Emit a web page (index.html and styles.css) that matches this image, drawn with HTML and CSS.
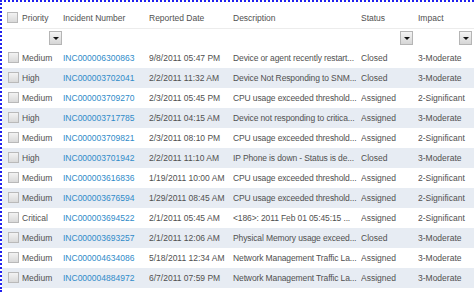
FILE: index.html
```html
<!DOCTYPE html>
<html>
<head>
<meta charset="utf-8">
<link rel="stylesheet" href="styles.css">
</head>
<body>
<div class="frame">
<table class="grid">
<colgroup>
<col class="c-chk"><col class="c-pri"><col class="c-inc"><col class="c-date"><col class="c-desc"><col class="c-status"><col class="c-imp">
</colgroup>
<thead>
<tr class="head">
<th><span class="cb"></span></th><th>Priority</th><th>Incident Number</th><th>Reported Date</th><th>Description</th><th>Status</th><th>Impact</th>
</tr>
<tr class="filter">
<td></td><td><span class="dd"></span></td><td></td><td></td><td></td><td><span class="dd"></span></td><td><span class="dd"></span></td>
</tr>
</thead>
<tbody>
<tr><td><span class="cb"></span></td><td>Medium</td><td class="link">INC000006300863</td><td>9/8/2011 05:47 PM</td><td class="desc">Device or agent recently restart...</td><td>Closed</td><td>3-Moderate</td></tr>
<tr><td><span class="cb"></span></td><td>High</td><td class="link">INC000003702041</td><td>2/2/2011 11:32 AM</td><td class="desc">Device Not Responding to SNM...</td><td>Closed</td><td>3-Moderate</td></tr>
<tr><td><span class="cb"></span></td><td>Medium</td><td class="link">INC000003709270</td><td>2/3/2011 05:45 PM</td><td class="desc">CPU usage exceeded threshold...</td><td>Assigned</td><td>2-Significant</td></tr>
<tr><td><span class="cb"></span></td><td>High</td><td class="link">INC000003717785</td><td>2/5/2011 04:15 AM</td><td class="desc">Device not responding to critica...</td><td>Assigned</td><td>3-Moderate</td></tr>
<tr><td><span class="cb"></span></td><td>Medium</td><td class="link">INC000003709821</td><td>2/3/2011 08:10 PM</td><td class="desc">CPU usage exceeded threshold...</td><td>Assigned</td><td>2-Significant</td></tr>
<tr><td><span class="cb"></span></td><td>High</td><td class="link">INC000003701942</td><td>2/2/2011 11:10 AM</td><td class="desc">IP Phone is down - Status is de...</td><td>Closed</td><td>3-Moderate</td></tr>
<tr><td><span class="cb"></span></td><td>Medium</td><td class="link">INC000003616836</td><td>1/19/2011 10:00 AM</td><td class="desc">CPU usage exceeded threshold...</td><td>Assigned</td><td>2-Significant</td></tr>
<tr><td><span class="cb"></span></td><td>Medium</td><td class="link">INC000003676594</td><td>1/29/2011 08:45 AM</td><td class="desc">CPU usage exceeded threshold...</td><td>Assigned</td><td>2-Significant</td></tr>
<tr><td><span class="cb"></span></td><td>Critical</td><td class="link">INC000003694522</td><td>2/1/2011 05:45 AM</td><td class="desc">&lt;186&gt;: 2011 Feb 01 05:45:15 ...</td><td>Assigned</td><td>2-Significant</td></tr>
<tr><td><span class="cb"></span></td><td>Medium</td><td class="link">INC000003693257</td><td>2/1/2011 12:06 AM</td><td class="desc">Physical Memory usage exceed...</td><td>Closed</td><td>3-Moderate</td></tr>
<tr><td><span class="cb"></span></td><td>Medium</td><td class="link">INC000004634086</td><td>5/18/2011 12:34 AM</td><td class="desc">Network Management Traffic La...</td><td>Assigned</td><td>3-Moderate</td></tr>
<tr><td><span class="cb"></span></td><td>Medium</td><td class="link">INC000004884972</td><td>6/7/2011 07:59 PM</td><td class="desc">Network Management Traffic La...</td><td>Assigned</td><td>3-Moderate</td></tr>
</tbody>
</table>
</div>
</body>
</html>
```
FILE: styles.css
```css
html, body {
  margin: 0;
  padding: 0;
  background: #ffffff;
}
.frame {
  width: 472px;
  height: 290px;
  border-top: 2px dotted #2020ee;
  border-left: 2px dotted #2020ee;
  overflow: hidden;
}
.grid {
  border-collapse: collapse;
  table-layout: fixed;
  width: 472px;
  font-family: "Liberation Sans", Arial, sans-serif;
  font-size: 8.5px;
  color: #505050;
}
.c-chk { width: 20px; }
.c-pri { width: 41px; }
.c-inc { width: 86px; }
.c-date { width: 84px; }
.c-desc { width: 128px; }
.c-status { width: 57px; }
.c-imp { width: 56px; }
.grid th, .grid td {
  padding: 0;
  white-space: nowrap;
  overflow: hidden;
  text-align: left;
  font-weight: normal;
}
.head th {
  height: 26px;
  border-bottom: 1px solid #ececec;
  vertical-align: middle;
  padding-top: 6px;
  box-sizing: border-box;
}
.head th:first-child {
  padding-left: 5px;
}
.filter td {
  height: 19px;
  vertical-align: middle;
  text-align: right;
}
.filter td:nth-child(2) { padding-right: 1px; }
.filter td:nth-child(6) { padding-right: 5px; }
.filter td:nth-child(7) { padding-right: 2px; }
tbody tr td {
  height: 20px;
  vertical-align: middle;
}
tbody tr:nth-child(even) td {
  background: #e7ecf3;
}
tbody td:first-child {
  padding-left: 6px;
}
.grid .desc {
  letter-spacing: -0.12px;
}
.link {
  color: #2f8bc9;
}
.cb {
  display: inline-block;
  width: 9px;
  height: 9px;
  border: 1px solid #b9b9b9;
  background: linear-gradient(#f3f3f3, #d9d9d9);
  vertical-align: middle;
}
.dd {
  display: inline-block;
  position: relative;
  width: 11px;
  height: 12px;
  border: 1px solid #b5b5b5;
  background: linear-gradient(#f4f4f4, #d6d6d6);
  vertical-align: middle;
}
.dd::after {
  content: "";
  position: absolute;
  left: 3px;
  top: 5px;
  border-left: 3px solid transparent;
  border-right: 3px solid transparent;
  border-top: 3px solid #111;
}
```
